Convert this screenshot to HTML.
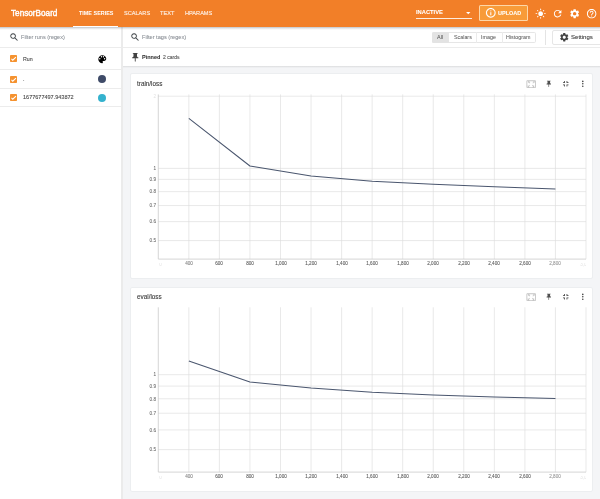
<!DOCTYPE html>
<html><head><meta charset="utf-8"><style>
html,body{margin:0;padding:0;width:600px;height:499px;overflow:hidden;background:#fff;font-family:"Liberation Sans", sans-serif;}
.t{position:absolute;white-space:nowrap;line-height:1;font-family:"Liberation Sans", sans-serif;will-change:transform;}
svg{overflow:visible}
</style></head><body>
<div style="position:absolute;left:0.00px;top:0.00px;width:600.00px;height:26.80px;background:#f27f28"></div><div class="t" style="left:11.00px;top:9.55px;font-size:8.2px;color:#fff;font-weight:400;-webkit-text-stroke:0.38px #fff;">TensorBoard</div><div class="t" style="left:78.60px;top:10.78px;font-size:5.45px;color:#fff;font-weight:700;">TIME SERIES</div><div class="t" style="left:123.60px;top:10.66px;font-size:5.6px;color:rgba(255,255,255,0.75);font-weight:400;-webkit-text-stroke:0.2px rgba(255,255,255,0.75);">SCALARS</div><div class="t" style="left:160.40px;top:10.66px;font-size:5.6px;color:rgba(255,255,255,0.75);font-weight:400;-webkit-text-stroke:0.2px rgba(255,255,255,0.75);">TEXT</div><div class="t" style="left:184.90px;top:10.66px;font-size:5.6px;color:rgba(255,255,255,0.75);font-weight:400;-webkit-text-stroke:0.2px rgba(255,255,255,0.75);">HPARAMS</div><div style="position:absolute;left:73.00px;top:25.80px;width:45.40px;height:1.00px;background:#fff"></div><div class="t" style="left:416.00px;top:10.33px;font-size:5.75px;color:#fff;font-weight:700;-webkit-text-stroke:0.05px #fff;">INACTIVE</div><svg style="position:absolute;left:466px;top:12px" width="4.5" height="2.2" viewBox="0 0 10 5"><path fill="#fff" d="M0 0l5 5 5-5z"/></svg><div style="position:absolute;left:416.00px;top:17.60px;width:56.00px;height:0.80px;background:rgba(255,255,255,0.85)"></div><div style="position:absolute;left:478.90px;top:5.20px;width:49.20px;height:15.60px;background:#f89b38;border:1px solid rgba(255,235,205,0.75);box-sizing:border-box;border-radius:1.5px"></div><svg style="position:absolute;left:484.90px;top:6.80px;stroke:#fff;stroke-width:0.25" width="11.60" height="11.60" viewBox="0 0 24 24"><path fill="#fff" d="M11 7h2v2h-2zm0 4h2v6h-2zm1-9C6.48 2 2 6.48 2 12s4.48 10 10 10 10-4.48 10-10S17.52 2 12 2zm0 18c-4.41 0-8-3.59-8-8s3.59-8 8-8 8 3.59 8 8-3.59 8-8 8z"/></svg><div class="t" style="left:498.40px;top:10.64px;font-size:5.5px;color:#fffaf0;font-weight:700;-webkit-text-stroke:0.12px #fffaf0;">UPLOAD</div><svg style="position:absolute;left:534.60px;top:8.10px;" width="11.30" height="11.30" viewBox="0 0 24 24"><path fill="#fff" d="M12 7c-2.76 0-5 2.24-5 5s2.24 5 5 5 5-2.24 5-5-2.24-5-5-5zM2 13h2c.55 0 1-.45 1-1s-.45-1-1-1H2c-.55 0-1 .45-1 1s.45 1 1 1zm18 0h2c.55 0 1-.45 1-1s-.45-1-1-1h-2c-.55 0-1 .45-1 1s.45 1 1 1zM11 2v2c0 .55.45 1 1 1s1-.45 1-1V2c0-.55-.45-1-1-1s-1 .45-1 1zm0 18v2c0 .55.45 1 1 1s1-.45 1-1v-2c0-.55-.45-1-1-1s-1 .45-1 1zM5.99 4.58c-.39-.39-1.03-.39-1.41 0-.39.39-.39 1.03 0 1.41l1.06 1.06c.39.39 1.03.39 1.41 0s.39-1.03 0-1.41L5.99 4.58zm12.37 12.37c-.39-.39-1.03-.39-1.41 0-.39.39-.39 1.03 0 1.41l1.06 1.06c.39.39 1.03.39 1.41 0 .39-.39.39-1.03 0-1.410l-1.06-1.06zm1.06-10.96c.39-.39.39-1.03 0-1.41-.39-.39-1.03-.39-1.41 0l-1.06 1.06c-.39.39-.39 1.03 0 1.41s1.03.39 1.41 0l1.06-1.06zM7.05 18.36c.39-.39.39-1.03 0-1.41-.39-.39-1.03-.39-1.41 0l-1.06 1.06c-.39.39-.39 1.03 0 1.41s1.03.39 1.41 0l1.06-1.06z"/></svg><svg style="position:absolute;left:551.90px;top:8.10px;" width="11.30" height="11.30" viewBox="0 0 24 24"><path fill="#fff" d="M17.65 6.35C16.2 4.9 14.21 4 12 4c-4.42 0-7.99 3.58-7.99 8s3.57 8 7.99 8c3.730 0 6.84-2.55 7.73-6h-2.08c-.82 2.33-3.04 4-5.65 4-3.31 0-6-2.69-6-6s2.69-6 6-6c1.66 0 3.14.69 4.22 1.78L13 11h7V4l-2.35 2.35z"/></svg><svg style="position:absolute;left:568.80px;top:8.10px;" width="11.30" height="11.30" viewBox="0 0 24 24"><path fill="#fff" d="M19.14 12.94c.04-.3.06-.61.06-.94 0-.32-.02-.64-.07-.94l2.03-1.58c.18-.14.23-.41.12-.61l-1.92-3.32c-.12-.22-.37-.29-.59-.22l-2.39.96c-.5-.38-1.03-.7-1.62-.94l-.36-2.54c-.04-.24-.24-.41-.48-.41h-3.84c-.24 0-.43.17-.47.41l-.36 2.54c-.59.24-1.13.57-1.62.94l-2.39-.96c-.22-.08-.47 0-.59.22L2.74 8.87c-.12.21-.08.47.12.61l2.03 1.58c-.05.3-.09.63-.09.94s.02.64.07.94l-2.03 1.58c-.18.14-.23.41-.12.61l1.92 3.32c.12.22.37.29.59.22l2.39-.96c.5.38 1.03.7 1.62.94l.36 2.54c.05.24.24.41.48.41h3.84c.24 0 .44-.17.47-.41l.36-2.54c.59-.24 1.13-.56 1.62-.94l2.39.96c.22.08.47 0 .59-.22l1.92-3.32c.12-.22.07-.47-.12-.61l-2.01-1.58zM12 15.6c-1.98 0-3.6-1.62-3.6-3.6s1.62-3.6 3.6-3.6 3.6 1.62 3.6 3.6-1.62 3.6-3.6 3.6z"/></svg><svg style="position:absolute;left:586.00px;top:8.10px;" width="11.30" height="11.30" viewBox="0 0 24 24"><path fill="#fff" d="M11 18h2v-2h-2v2zm1-16C6.48 2 2 6.48 2 12s4.48 10 10 10 10-4.48 10-10S17.52 2 12 2zm0 18c-4.41 0-8-3.59-8-8s3.59-8 8-8 8 3.59 8 8-3.59 8-8 8zm0-14c-2.21 0-4 1.79-4 4h2c0-1.1.9-2 2-2s2 .9 2 2c0 2-3 1.75-3 5h2c0-2.25 3-2.5 3-5 0-2.21-1.79-4-4-4z"/></svg><div style="position:absolute;left:0.00px;top:26.70px;width:121.00px;height:472.30px;background:#fff"></div><div style="position:absolute;left:121.00px;top:26.70px;width:2.00px;height:472.30px;background:#ebebeb"></div><svg style="position:absolute;left:8.80px;top:32.40px;stroke:#46494d;stroke-width:0.2" width="10.30" height="10.30" viewBox="0 0 24 24"><path fill="#46494d" d="M15.5 14h-.79l-.28-.27C15.41 12.59 16 11.11 16 9.5 16 5.91 13.090 3 9.5 3S3 5.910 3 9.5 5.91 16 9.5 16c1.61 0 3.09-.59 4.23-1.57l.27.28v.79l5 4.99L20.49 19l-4.99-5zm-6 0C7.01 14 5 11.99 5 9.5S7.01 5 9.5 5 14 7.01 14 9.5 11.99 14 9.5 14z"/></svg><div class="t" style="left:21.00px;top:35.20px;font-size:5.55px;color:#868b92;font-weight:400;-webkit-text-stroke:0.06px #868b92;">Filter runs (regex)</div><div style="position:absolute;left:0.00px;top:47.20px;width:121.00px;height:0.60px;background:#ececec"></div><div style="position:absolute;left:0.00px;top:68.80px;width:121.00px;height:0.60px;background:#ececec"></div><div style="position:absolute;left:0.00px;top:87.90px;width:121.00px;height:0.60px;background:#ececec"></div><div style="position:absolute;left:0.00px;top:105.90px;width:121.00px;height:0.60px;background:#ececec"></div><div style="position:absolute;left:9.8px;top:55.1px;width:7.2px;height:7.2px;background:#f5922f;border-radius:0.8px"></div><svg style="position:absolute;left:9.8px;top:55.1px" width="7.2" height="7.2" viewBox="0 0 24 24"><path fill="none" stroke="#fff" stroke-width="3.4" d="M4.8 13.2L9.2 17.4 19.8 7.2"/></svg><div class="t" style="left:23.00px;top:56.61px;font-size:5.3px;color:#4a4a4a;font-weight:400;-webkit-text-stroke:0.1px #4a4a4a;">Run</div><svg style="position:absolute;left:96.9px;top:53.6px" width="10.6" height="10.6" viewBox="0 0 24 24"><path fill="#000" d="M12 3c-4.97 0-9 4.03-9 9s4.03 9 9 9c.83 0 1.5-.67 1.5-1.5 0-.39-.15-.74-.39-1.01-.23-.26-.38-.61-.38-.99 0-.83.67-1.5 1.5-1.5H16c2.76 0 5-2.24 5-5 0-4.42-4.03-8-9-8z"/><circle cx="6.3" cy="10.9" r="1.6" fill="#fff"/><circle cx="10.1" cy="6.4" r="1.6" fill="#fff"/><circle cx="14.8" cy="6.4" r="1.6" fill="#fff"/><circle cx="17.2" cy="10.9" r="1.6" fill="#fff"/></svg><div style="position:absolute;left:9.8px;top:75.6px;width:7.2px;height:7.2px;background:#f5922f;border-radius:0.8px"></div><svg style="position:absolute;left:9.8px;top:75.6px" width="7.2" height="7.2" viewBox="0 0 24 24"><path fill="none" stroke="#fff" stroke-width="3.4" d="M4.8 13.2L9.2 17.4 19.8 7.2"/></svg><div class="t" style="left:23.00px;top:76.73px;font-size:5.4px;color:#4a4a4a;font-weight:400;-webkit-text-stroke:0.1px #4a4a4a;">.</div><div style="position:absolute;left:98px;top:75px;width:8.3px;height:8.3px;border-radius:50%;background:#3f4b68"></div><div style="position:absolute;left:9.8px;top:94.0px;width:7.2px;height:7.2px;background:#f5922f;border-radius:0.8px"></div><svg style="position:absolute;left:9.8px;top:94.0px" width="7.2" height="7.2" viewBox="0 0 24 24"><path fill="none" stroke="#fff" stroke-width="3.4" d="M4.8 13.2L9.2 17.4 19.8 7.2"/></svg><div class="t" style="left:23.00px;top:95.12px;font-size:5.52px;color:#4a4a4a;font-weight:400;-webkit-text-stroke:0.1px #4a4a4a;">1677677497.943872</div><div style="position:absolute;left:98px;top:93.6px;width:8.1px;height:8.1px;border-radius:50%;background:#34b2ce"></div><div style="position:absolute;left:123.00px;top:26.70px;width:477.00px;height:472.30px;background:#f4f5f7"></div><div style="position:absolute;left:123.00px;top:26.70px;width:477.00px;height:39.40px;background:#fff"></div><div style="position:absolute;left:123.00px;top:47.20px;width:477.00px;height:0.60px;background:#ececec"></div><div style="position:absolute;left:123.00px;top:66.00px;width:477.00px;height:2.00px;background:linear-gradient(rgba(0,0,0,0.10),rgba(0,0,0,0.0))"></div><svg style="position:absolute;left:130.30px;top:32.40px;stroke:#46494d;stroke-width:0.2" width="10.30" height="10.30" viewBox="0 0 24 24"><path fill="#46494d" d="M15.5 14h-.79l-.28-.27C15.41 12.59 16 11.11 16 9.5 16 5.91 13.090 3 9.5 3S3 5.910 3 9.5 5.91 16 9.5 16c1.61 0 3.09-.59 4.23-1.57l.27.28v.79l5 4.99L20.49 19l-4.99-5zm-6 0C7.01 14 5 11.99 5 9.5S7.01 5 9.5 5 14 7.01 14 9.5 11.99 14 9.5 14z"/></svg><div class="t" style="left:141.60px;top:35.01px;font-size:5.65px;color:#868b92;font-weight:400;-webkit-text-stroke:0.06px #868b92;">Filter tags (regex)</div><div style="position:absolute;left:432.00px;top:32.00px;width:103.60px;height:11.00px;border:0.5px solid #e6e6e6;box-sizing:border-box;border-radius:1.6px;background:#fff"></div><div style="position:absolute;left:432.00px;top:32.00px;width:16.00px;height:11.00px;background:#e3e3e3;border-radius:1.6px 0 0 1.6px"></div><div style="position:absolute;left:476.00px;top:32.00px;width:0.50px;height:11.00px;background:#ebebeb"></div><div style="position:absolute;left:501.60px;top:32.00px;width:0.50px;height:11.00px;background:#ebebeb"></div><div style="position:absolute;left:448.00px;top:32.00px;width:0.50px;height:11.00px;background:#e4e4e4"></div><div class="t" style="left:436.50px;top:34.78px;font-size:5.45px;color:#555;font-weight:400;-webkit-text-stroke:0.03px #555;">All</div><div class="t" style="left:453.50px;top:34.87px;font-size:5.35px;color:#555;font-weight:400;-webkit-text-stroke:0.03px #555;">Scalars</div><div class="t" style="left:481.30px;top:34.87px;font-size:5.35px;color:#555;font-weight:400;-webkit-text-stroke:0.03px #555;">Image</div><div class="t" style="left:505.90px;top:34.87px;font-size:5.35px;color:#555;font-weight:400;-webkit-text-stroke:0.03px #555;">Histogram</div><div style="position:absolute;left:545.00px;top:29.50px;width:0.50px;height:15.20px;background:#e4e4e4"></div><div style="position:absolute;left:552.40px;top:30.40px;width:60.00px;height:14.30px;border:0.5px solid #e6e6e6;box-sizing:border-box;border-radius:2px;background:#fff"></div><svg style="position:absolute;left:558.90px;top:31.80px;" width="10.50" height="10.50" viewBox="0 0 24 24"><path fill="#424242" d="M19.14 12.94c.04-.3.06-.61.06-.94 0-.32-.02-.64-.07-.94l2.03-1.58c.18-.14.23-.41.12-.61l-1.92-3.32c-.12-.22-.37-.29-.59-.22l-2.39.96c-.5-.38-1.03-.7-1.62-.94l-.36-2.54c-.04-.24-.24-.41-.48-.41h-3.84c-.24 0-.43.17-.47.41l-.36 2.54c-.59.24-1.13.57-1.62.94l-2.39-.96c-.22-.08-.47 0-.59.22L2.74 8.87c-.12.21-.08.47.12.61l2.03 1.58c-.05.3-.09.63-.09.94s.02.64.07.94l-2.03 1.58c-.18.14-.23.41-.12.61l1.92 3.32c.12.22.37.29.59.22l2.39-.96c.5.38 1.03.7 1.62.94l.36 2.54c.05.24.24.41.48.41h3.84c.24 0 .44-.17.47-.41l.36-2.54c.59-.24 1.13-.56 1.62-.94l2.39.96c.22.08.47 0 .59-.22l1.92-3.32c.12-.22.07-.47-.12-.61l-2.01-1.58zM12 15.6c-1.98 0-3.6-1.62-3.6-3.6s1.62-3.6 3.6-3.6 3.6 1.62 3.6 3.6-1.62 3.6-3.6 3.6z"/></svg><div class="t" style="left:571.00px;top:34.18px;font-size:6.05px;color:#3c3c3c;font-weight:400;-webkit-text-stroke:0.1px #3c3c3c;">Settings</div><svg style="position:absolute;left:129.90px;top:51.90px;" width="10.50" height="10.50" viewBox="0 0 24 24"><path fill="#424242" d="M16 9V4h1c.55 0 1-.45 1-1s-.45-1-1-1H7c-.55 0-1 .45-1 1s.45 1 1 1h1v5c0 1.66-1.34 3-3 3v2h5.97v7l1 1 1-1v-7H19v-2c-1.66 0-3-1.34-3-3z"/></svg><div class="t" style="left:142.00px;top:54.74px;font-size:5.5px;color:#333;font-weight:700;-webkit-text-stroke:0.05px #333;">Pinned</div><div class="t" style="left:163.40px;top:55.12px;font-size:5.05px;color:#555;font-weight:400;-webkit-text-stroke:0.1px #555;">2 cards</div><div style="position:absolute;left:0.00px;top:26.80px;width:600.00px;height:3.00px;background:linear-gradient(rgba(50,60,75,0.30),rgba(50,60,75,0.08) 60%,rgba(50,60,75,0))"></div><div style="position:absolute;left:129.60px;top:73.30px;width:463.40px;height:205.90px;background:#fff;border:1px solid #eceef0;box-sizing:border-box;border-radius:2px"></div><div class="t" style="left:136.90px;top:80.92px;font-size:6.35px;color:#3c3c3c;font-weight:400;-webkit-text-stroke:0.1px #3c3c3c;">train/loss</div><svg style="position:absolute;left:526.30px;top:78.80px;" width="10.40" height="10.40" viewBox="0 0 24 24"><path fill="#c4c4c4" d="M21 3H3c-1.1 0-2 .9-2 2v14c0 1.1.9 2 2 2h18c1.1 0 2-.9 2-2V5c0-1.1-.9-2-2-2zm0 16.01H3V4.99h18v14.02zM5 7l3.5 3.5L10 9 7 6h2V5H5v4h1V7zm14 0v2h1V5h-4v1h2l-3 3 1.5 1.5L19 7zM5 17v-2H4v4h4v-1H6l3-3-1.5-1.5L5 17zm14 0l-3.5-3.5L14 15l3 3h-2v1h4v-4h-1v2z"/></svg><svg style="position:absolute;left:544.70px;top:79.70px;" width="7.60" height="7.60" viewBox="0 0 24 24"><path fill="#505050" d="M16 9V4h1c.55 0 1-.45 1-1s-.45-1-1-1H7c-.55 0-1 .45-1 1s.45 1 1 1h1v5c0 1.66-1.34 3-3 3v2h5.97v7l1 1 1-1v-7H19v-2c-1.66 0-3-1.34-3-3z"/></svg><svg style="position:absolute;left:560.50px;top:78.70px;" width="9.50" height="9.50" viewBox="0 0 24 24"><path fill="#424242" d="M5 16h3v3h2v-5H5v2zm3-8H5v2h5V5H8v3zm6 11h2v-3h3v-2h-5v5zm2-11V5h-2v5h5V8h-3z"/></svg><svg style="position:absolute;left:577.50px;top:78.70px;" width="9.60" height="9.60" viewBox="0 0 24 24"><path fill="#424242" d="M12 8c1.1 0 2-.9 2-2s-.9-2-2-2-2 .9-2 2 .9 2 2 2zm0 2c-1.1 0-2 .9-2 2s.9 2 2 2 2-.9 2-2-.9-2-2-2zm0 6c-1.1 0-2 .9-2 2s.9 2 2 2 2-.9 2-2-.9-2-2-2z"/></svg><svg style="position:absolute;left:0;top:0" width="600" height="499" viewBox="0 0 600 499"><line x1="188.85" y1="94.40" x2="188.85" y2="259.10" stroke="#dddddd" stroke-width="0.65"/><line x1="219.40" y1="94.40" x2="219.40" y2="259.10" stroke="#dddddd" stroke-width="0.65"/><line x1="249.95" y1="94.40" x2="249.95" y2="259.10" stroke="#dddddd" stroke-width="0.65"/><line x1="280.50" y1="94.40" x2="280.50" y2="259.10" stroke="#dddddd" stroke-width="0.65"/><line x1="311.05" y1="94.40" x2="311.05" y2="259.10" stroke="#dddddd" stroke-width="0.65"/><line x1="341.60" y1="94.40" x2="341.60" y2="259.10" stroke="#dddddd" stroke-width="0.65"/><line x1="372.15" y1="94.40" x2="372.15" y2="259.10" stroke="#dddddd" stroke-width="0.65"/><line x1="402.70" y1="94.40" x2="402.70" y2="259.10" stroke="#dddddd" stroke-width="0.65"/><line x1="433.25" y1="94.40" x2="433.25" y2="259.10" stroke="#dddddd" stroke-width="0.65"/><line x1="463.80" y1="94.40" x2="463.80" y2="259.10" stroke="#dddddd" stroke-width="0.65"/><line x1="494.35" y1="94.40" x2="494.35" y2="259.10" stroke="#dddddd" stroke-width="0.65"/><line x1="524.90" y1="94.40" x2="524.90" y2="259.10" stroke="#dddddd" stroke-width="0.65"/><line x1="555.45" y1="94.40" x2="555.45" y2="259.10" stroke="#dddddd" stroke-width="0.65"/><line x1="586.00" y1="94.40" x2="586.00" y2="259.10" stroke="#dddddd" stroke-width="0.65"/><line x1="158.30" y1="168.40" x2="586.00" y2="168.40" stroke="#dddddd" stroke-width="0.65"/><line x1="158.30" y1="179.37" x2="586.00" y2="179.37" stroke="#dddddd" stroke-width="0.65"/><line x1="158.30" y1="191.64" x2="586.00" y2="191.64" stroke="#dddddd" stroke-width="0.65"/><line x1="158.30" y1="205.55" x2="586.00" y2="205.55" stroke="#dddddd" stroke-width="0.65"/><line x1="158.30" y1="221.60" x2="586.00" y2="221.60" stroke="#dddddd" stroke-width="0.65"/><line x1="158.30" y1="240.59" x2="586.00" y2="240.59" stroke="#dddddd" stroke-width="0.65"/><line x1="158.30" y1="96.21" x2="586.00" y2="96.21" stroke="#dddddd" stroke-width="0.65"/><line x1="158.30" y1="94.40" x2="158.30" y2="259.10" stroke="#c4c4c4" stroke-width="0.7"/><line x1="158.30" y1="259.10" x2="586.00" y2="259.10" stroke="#c4c4c4" stroke-width="0.7"/><polyline points="188.85,118.40 249.95,166.00 311.05,176.00 372.15,181.20 433.25,184.30 494.35,186.80 555.45,188.90" fill="none" stroke="#4a566e" stroke-width="1.05" stroke-linejoin="round"/></svg><div class="t" style="left:0;width:156.0px;text-align:right;top:167.15px;font-size:4.65px;line-height:4.65px;color:#666;-webkit-text-stroke:0.06px #666">1</div><div class="t" style="left:0;width:156.0px;text-align:right;top:178.12px;font-size:4.65px;line-height:4.65px;color:#666;-webkit-text-stroke:0.06px #666">0.9</div><div class="t" style="left:0;width:156.0px;text-align:right;top:190.39px;font-size:4.65px;line-height:4.65px;color:#666;-webkit-text-stroke:0.06px #666">0.8</div><div class="t" style="left:0;width:156.0px;text-align:right;top:204.30px;font-size:4.65px;line-height:4.65px;color:#666;-webkit-text-stroke:0.06px #666">0.7</div><div class="t" style="left:0;width:156.0px;text-align:right;top:220.35px;font-size:4.65px;line-height:4.65px;color:#666;-webkit-text-stroke:0.06px #666">0.6</div><div class="t" style="left:0;width:156.0px;text-align:right;top:239.34px;font-size:4.65px;line-height:4.65px;color:#666;-webkit-text-stroke:0.06px #666">0.5</div><div class="t" style="left:0;width:156.0px;text-align:right;top:94.66px;font-size:4.65px;line-height:4.65px;color:#e2e2e2">2</div><div style="position:absolute;left:159.30px;top:262.70px;width:6px;height:6px;overflow:hidden"><div class="t" style="left:-16.00px;width:30px;text-align:center;top:0;font-size:4.6px;line-height:4.6px;color:#e4e4e4">200</div></div><div style="position:absolute;left:579.5px;top:262.70px;width:6px;height:6px;overflow:hidden"><div class="t" style="left:-8.50px;width:30px;text-align:center;top:0;font-size:4.6px;line-height:4.6px;color:#e4e4e4">3,000</div></div><div class="t" style="left:173.85px;width:30px;text-align:center;top:262.40px;font-size:4.6px;line-height:4.6px;color:#858585;-webkit-text-stroke:0.1px #858585">400</div><div class="t" style="left:204.40px;width:30px;text-align:center;top:262.40px;font-size:4.6px;line-height:4.6px;color:#5f5f5f;-webkit-text-stroke:0.1px #5f5f5f">600</div><div class="t" style="left:234.95px;width:30px;text-align:center;top:262.40px;font-size:4.6px;line-height:4.6px;color:#5f5f5f;-webkit-text-stroke:0.1px #5f5f5f">800</div><div class="t" style="left:265.50px;width:30px;text-align:center;top:262.40px;font-size:4.6px;line-height:4.6px;color:#5f5f5f;-webkit-text-stroke:0.1px #5f5f5f">1,000</div><div class="t" style="left:296.05px;width:30px;text-align:center;top:262.40px;font-size:4.6px;line-height:4.6px;color:#5f5f5f;-webkit-text-stroke:0.1px #5f5f5f">1,200</div><div class="t" style="left:326.60px;width:30px;text-align:center;top:262.40px;font-size:4.6px;line-height:4.6px;color:#5f5f5f;-webkit-text-stroke:0.1px #5f5f5f">1,400</div><div class="t" style="left:357.15px;width:30px;text-align:center;top:262.40px;font-size:4.6px;line-height:4.6px;color:#5f5f5f;-webkit-text-stroke:0.1px #5f5f5f">1,600</div><div class="t" style="left:387.70px;width:30px;text-align:center;top:262.40px;font-size:4.6px;line-height:4.6px;color:#5f5f5f;-webkit-text-stroke:0.1px #5f5f5f">1,800</div><div class="t" style="left:418.25px;width:30px;text-align:center;top:262.40px;font-size:4.6px;line-height:4.6px;color:#5f5f5f;-webkit-text-stroke:0.1px #5f5f5f">2,000</div><div class="t" style="left:448.80px;width:30px;text-align:center;top:262.40px;font-size:4.6px;line-height:4.6px;color:#5f5f5f;-webkit-text-stroke:0.1px #5f5f5f">2,200</div><div class="t" style="left:479.35px;width:30px;text-align:center;top:262.40px;font-size:4.6px;line-height:4.6px;color:#5f5f5f;-webkit-text-stroke:0.1px #5f5f5f">2,400</div><div class="t" style="left:509.90px;width:30px;text-align:center;top:262.40px;font-size:4.6px;line-height:4.6px;color:#5f5f5f;-webkit-text-stroke:0.1px #5f5f5f">2,600</div><div class="t" style="left:540.45px;width:30px;text-align:center;top:262.40px;font-size:4.6px;line-height:4.6px;color:#999;-webkit-text-stroke:0.1px #999">2,800</div><div style="position:absolute;left:129.60px;top:286.80px;width:463.40px;height:205.40px;background:#fff;border:1px solid #eceef0;box-sizing:border-box;border-radius:2px"></div><div class="t" style="left:136.90px;top:294.42px;font-size:6.35px;color:#3c3c3c;font-weight:400;-webkit-text-stroke:0.1px #3c3c3c;">eval/loss</div><svg style="position:absolute;left:526.30px;top:292.30px;" width="10.40" height="10.40" viewBox="0 0 24 24"><path fill="#c4c4c4" d="M21 3H3c-1.1 0-2 .9-2 2v14c0 1.1.9 2 2 2h18c1.1 0 2-.9 2-2V5c0-1.1-.9-2-2-2zm0 16.01H3V4.99h18v14.02zM5 7l3.5 3.5L10 9 7 6h2V5H5v4h1V7zm14 0v2h1V5h-4v1h2l-3 3 1.5 1.5L19 7zM5 17v-2H4v4h4v-1H6l3-3-1.5-1.5L5 17zm14 0l-3.5-3.5L14 15l3 3h-2v1h4v-4h-1v2z"/></svg><svg style="position:absolute;left:544.70px;top:293.20px;" width="7.60" height="7.60" viewBox="0 0 24 24"><path fill="#505050" d="M16 9V4h1c.55 0 1-.45 1-1s-.45-1-1-1H7c-.55 0-1 .45-1 1s.45 1 1 1h1v5c0 1.66-1.34 3-3 3v2h5.97v7l1 1 1-1v-7H19v-2c-1.66 0-3-1.34-3-3z"/></svg><svg style="position:absolute;left:560.50px;top:292.20px;" width="9.50" height="9.50" viewBox="0 0 24 24"><path fill="#424242" d="M5 16h3v3h2v-5H5v2zm3-8H5v2h5V5H8v3zm6 11h2v-3h3v-2h-5v5zm2-11V5h-2v5h5V8h-3z"/></svg><svg style="position:absolute;left:577.50px;top:292.20px;" width="9.60" height="9.60" viewBox="0 0 24 24"><path fill="#424242" d="M12 8c1.1 0 2-.9 2-2s-.9-2-2-2-2 .9-2 2 .9 2 2 2zm0 2c-1.1 0-2 .9-2 2s.9 2 2 2 2-.9 2-2-.9-2-2-2zm0 6c-1.1 0-2 .9-2 2s.9 2 2 2 2-.9 2-2-.9-2-2-2z"/></svg><svg style="position:absolute;left:0;top:0" width="600" height="499" viewBox="0 0 600 499"><line x1="188.85" y1="307.30" x2="188.85" y2="472.10" stroke="#dddddd" stroke-width="0.65"/><line x1="219.40" y1="307.30" x2="219.40" y2="472.10" stroke="#dddddd" stroke-width="0.65"/><line x1="249.95" y1="307.30" x2="249.95" y2="472.10" stroke="#dddddd" stroke-width="0.65"/><line x1="280.50" y1="307.30" x2="280.50" y2="472.10" stroke="#dddddd" stroke-width="0.65"/><line x1="311.05" y1="307.30" x2="311.05" y2="472.10" stroke="#dddddd" stroke-width="0.65"/><line x1="341.60" y1="307.30" x2="341.60" y2="472.10" stroke="#dddddd" stroke-width="0.65"/><line x1="372.15" y1="307.30" x2="372.15" y2="472.10" stroke="#dddddd" stroke-width="0.65"/><line x1="402.70" y1="307.30" x2="402.70" y2="472.10" stroke="#dddddd" stroke-width="0.65"/><line x1="433.25" y1="307.30" x2="433.25" y2="472.10" stroke="#dddddd" stroke-width="0.65"/><line x1="463.80" y1="307.30" x2="463.80" y2="472.10" stroke="#dddddd" stroke-width="0.65"/><line x1="494.35" y1="307.30" x2="494.35" y2="472.10" stroke="#dddddd" stroke-width="0.65"/><line x1="524.90" y1="307.30" x2="524.90" y2="472.10" stroke="#dddddd" stroke-width="0.65"/><line x1="555.45" y1="307.30" x2="555.45" y2="472.10" stroke="#dddddd" stroke-width="0.65"/><line x1="586.00" y1="307.30" x2="586.00" y2="472.10" stroke="#dddddd" stroke-width="0.65"/><line x1="158.30" y1="374.70" x2="586.00" y2="374.70" stroke="#dddddd" stroke-width="0.65"/><line x1="158.30" y1="386.08" x2="586.00" y2="386.08" stroke="#dddddd" stroke-width="0.65"/><line x1="158.30" y1="398.81" x2="586.00" y2="398.81" stroke="#dddddd" stroke-width="0.65"/><line x1="158.30" y1="413.24" x2="586.00" y2="413.24" stroke="#dddddd" stroke-width="0.65"/><line x1="158.30" y1="429.90" x2="586.00" y2="429.90" stroke="#dddddd" stroke-width="0.65"/><line x1="158.30" y1="449.60" x2="586.00" y2="449.60" stroke="#dddddd" stroke-width="0.65"/><line x1="158.30" y1="307.30" x2="158.30" y2="472.10" stroke="#c4c4c4" stroke-width="0.7"/><line x1="158.30" y1="472.10" x2="586.00" y2="472.10" stroke="#c4c4c4" stroke-width="0.7"/><polyline points="188.85,361.00 249.95,382.00 311.05,388.10 372.15,392.30 433.25,395.00 494.35,397.10 555.45,398.50" fill="none" stroke="#4a566e" stroke-width="1.05" stroke-linejoin="round"/></svg><div class="t" style="left:0;width:156.0px;text-align:right;top:373.45px;font-size:4.65px;line-height:4.65px;color:#666;-webkit-text-stroke:0.06px #666">1</div><div class="t" style="left:0;width:156.0px;text-align:right;top:384.83px;font-size:4.65px;line-height:4.65px;color:#666;-webkit-text-stroke:0.06px #666">0.9</div><div class="t" style="left:0;width:156.0px;text-align:right;top:397.56px;font-size:4.65px;line-height:4.65px;color:#666;-webkit-text-stroke:0.06px #666">0.8</div><div class="t" style="left:0;width:156.0px;text-align:right;top:411.99px;font-size:4.65px;line-height:4.65px;color:#666;-webkit-text-stroke:0.06px #666">0.7</div><div class="t" style="left:0;width:156.0px;text-align:right;top:428.65px;font-size:4.65px;line-height:4.65px;color:#666;-webkit-text-stroke:0.06px #666">0.6</div><div class="t" style="left:0;width:156.0px;text-align:right;top:448.35px;font-size:4.65px;line-height:4.65px;color:#666;-webkit-text-stroke:0.06px #666">0.5</div><div style="position:absolute;left:159.30px;top:475.70px;width:6px;height:6px;overflow:hidden"><div class="t" style="left:-16.00px;width:30px;text-align:center;top:0;font-size:4.6px;line-height:4.6px;color:#e4e4e4">200</div></div><div style="position:absolute;left:579.5px;top:475.70px;width:6px;height:6px;overflow:hidden"><div class="t" style="left:-8.50px;width:30px;text-align:center;top:0;font-size:4.6px;line-height:4.6px;color:#e4e4e4">3,000</div></div><div class="t" style="left:173.85px;width:30px;text-align:center;top:475.40px;font-size:4.6px;line-height:4.6px;color:#858585;-webkit-text-stroke:0.1px #858585">400</div><div class="t" style="left:204.40px;width:30px;text-align:center;top:475.40px;font-size:4.6px;line-height:4.6px;color:#5f5f5f;-webkit-text-stroke:0.1px #5f5f5f">600</div><div class="t" style="left:234.95px;width:30px;text-align:center;top:475.40px;font-size:4.6px;line-height:4.6px;color:#5f5f5f;-webkit-text-stroke:0.1px #5f5f5f">800</div><div class="t" style="left:265.50px;width:30px;text-align:center;top:475.40px;font-size:4.6px;line-height:4.6px;color:#5f5f5f;-webkit-text-stroke:0.1px #5f5f5f">1,000</div><div class="t" style="left:296.05px;width:30px;text-align:center;top:475.40px;font-size:4.6px;line-height:4.6px;color:#5f5f5f;-webkit-text-stroke:0.1px #5f5f5f">1,200</div><div class="t" style="left:326.60px;width:30px;text-align:center;top:475.40px;font-size:4.6px;line-height:4.6px;color:#5f5f5f;-webkit-text-stroke:0.1px #5f5f5f">1,400</div><div class="t" style="left:357.15px;width:30px;text-align:center;top:475.40px;font-size:4.6px;line-height:4.6px;color:#5f5f5f;-webkit-text-stroke:0.1px #5f5f5f">1,600</div><div class="t" style="left:387.70px;width:30px;text-align:center;top:475.40px;font-size:4.6px;line-height:4.6px;color:#5f5f5f;-webkit-text-stroke:0.1px #5f5f5f">1,800</div><div class="t" style="left:418.25px;width:30px;text-align:center;top:475.40px;font-size:4.6px;line-height:4.6px;color:#5f5f5f;-webkit-text-stroke:0.1px #5f5f5f">2,000</div><div class="t" style="left:448.80px;width:30px;text-align:center;top:475.40px;font-size:4.6px;line-height:4.6px;color:#5f5f5f;-webkit-text-stroke:0.1px #5f5f5f">2,200</div><div class="t" style="left:479.35px;width:30px;text-align:center;top:475.40px;font-size:4.6px;line-height:4.6px;color:#5f5f5f;-webkit-text-stroke:0.1px #5f5f5f">2,400</div><div class="t" style="left:509.90px;width:30px;text-align:center;top:475.40px;font-size:4.6px;line-height:4.6px;color:#5f5f5f;-webkit-text-stroke:0.1px #5f5f5f">2,600</div><div class="t" style="left:540.45px;width:30px;text-align:center;top:475.40px;font-size:4.6px;line-height:4.6px;color:#999;-webkit-text-stroke:0.1px #999">2,800</div>
</body></html>
